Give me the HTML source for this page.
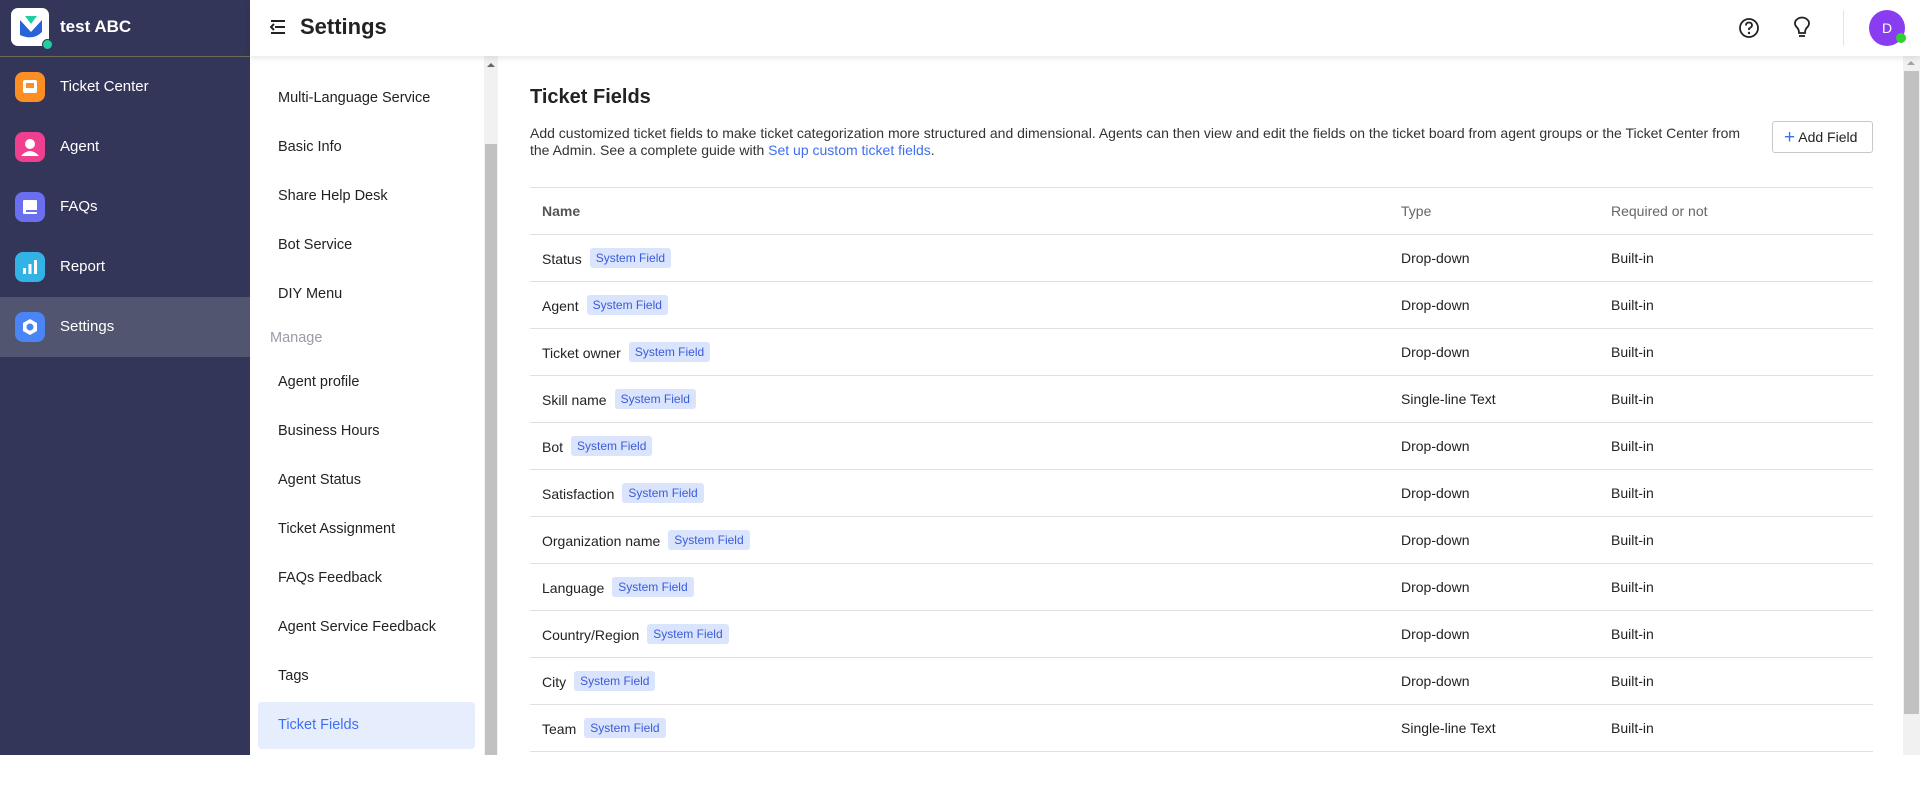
<!DOCTYPE html>
<html><head><meta charset="utf-8"><style>
*{box-sizing:border-box;margin:0;padding:0}
body{width:1920px;height:755px;overflow:hidden;font-family:"Liberation Sans",Arial,sans-serif;background:#fff;position:relative;color:#222}
.side{position:absolute;left:0;top:0;width:250px;height:755px;background:#343659}
.logo{position:absolute;left:11px;top:8px;width:38px;height:38px;background:#fff;border-radius:7px}
.logo .dot{position:absolute;right:-4px;bottom:-4px;width:11px;height:11px;border-radius:50%;background:#1ecfa0;border:1px solid #343659}
.brand{position:absolute;left:60px;top:17px;color:#fff;font-weight:bold;font-size:17px}
.sdiv{position:absolute;left:0;top:56px;width:250px;height:1px;background:#6b6a55}
.nav{position:absolute;left:0;width:250px;height:60px;color:#fff;font-size:15px}
.nav.act{background:#515570}
.nav .ic{position:absolute;left:15px;top:15px;width:30px;height:30px;border-radius:8px}
.nav span{position:absolute;left:60px;top:21px}
.hdr{position:absolute;left:250px;top:0;width:1670px;height:56px;background:#fff;box-shadow:0 2px 6px rgba(0,0,0,.1);z-index:2}
.hdr h1{position:absolute;left:50px;top:14px;font-size:22px;font-weight:bold;color:#222}
.menu{position:absolute;left:250px;top:56px;width:234px;height:699px;background:#fff}
.mi{position:absolute;left:28px;font-size:14.5px;color:#222}
.msb{position:absolute;left:484px;top:56px;width:14px;height:699px;background:#f1f1f1}
.main{position:absolute;left:498px;top:56px;width:1405px;height:699px;background:#fff}
.rsb{position:absolute;left:1903px;top:56px;width:17px;height:699px;background:#f1f1f1}
.row{position:absolute;left:530px;width:1343px;height:47px;border-top:1px solid #e0e0e0;font-size:14px}
.row .n{position:absolute;left:12px;top:15px}
.row .t{position:absolute;left:871px;top:15px}
.row .r{position:absolute;left:1081px;top:15px}
.tag{display:inline-block;background:#dbe4fd;color:#3a5bd9;font-size:12px;padding:3px 6px;border-radius:3px;margin-left:8px;position:relative;top:-2px}
</style></head><body>
<div class="side">
 <div class="logo"><svg width="38" height="38" viewBox="0 0 38 38"><path d="M9 12 L20 24 L31 12 L31 24 Q22 33 9 27Z" fill="#2a63d8"/><path d="M14 8 L26 8 L20 16Z" fill="#1ecfa0"/></svg><div class="dot"></div></div>
 <div class="brand">test ABC</div>
 <div class="sdiv"></div>
 <div class="nav" style="top:57px"><div class="ic" style="background:#fb8f24"><svg width="30" height="30"><rect x="8" y="8" width="14" height="13" rx="2" fill="#fff"/><rect x="11" y="11" width="8" height="5" fill="#fb8f24"/></svg></div><span>Ticket Center</span></div>
 <div class="nav" style="top:117px"><div class="ic" style="background:#ef3f8f"><svg width="30" height="30"><circle cx="15" cy="12" r="5" fill="#fff"/><path d="M6 24 Q15 14 24 24Z" fill="#fff"/></svg></div><span>Agent</span></div>
 <div class="nav" style="top:177px"><div class="ic" style="background:#6a6ff0"><svg width="30" height="30"><rect x="8" y="8" width="14" height="14" rx="1" fill="#fff"/><rect x="11" y="18" width="11" height="2" fill="#6a6ff0"/></svg></div><span>FAQs</span></div>
 <div class="nav" style="top:237px"><div class="ic" style="background:#33b2e6"><svg width="30" height="30"><rect x="8" y="16" width="3" height="6" fill="#fff"/><rect x="13.5" y="12" width="3" height="10" fill="#fff"/><rect x="19" y="8" width="3" height="14" fill="#fff"/></svg></div><span>Report</span></div>
 <div class="nav act" style="top:297px"><div class="ic" style="background:#4b84f5"><svg width="30" height="30"><polygon points="15,7 22,11 22,19 15,23 8,19 8,11" fill="#fff"/><circle cx="15" cy="15" r="3.5" fill="#4b84f5"/></svg></div><span>Settings</span></div>
</div>
<div class="hdr">
 <svg style="position:absolute;left:20px;top:20px" width="16" height="14"><path d="M1 1H15M5 7H15M1 13H15M4 4L1 7L4 10" stroke="#222" stroke-width="2" fill="none"/></svg>
 <h1>Settings</h1>
 <svg style="position:absolute;left:1488px;top:17px" width="22" height="22"><circle cx="11" cy="11" r="9" stroke="#222" stroke-width="1.8" fill="none"/><path d="M8 8.5Q8 5.5 11 5.5Q14 5.5 14 8.5Q14 10 11 11.5V13" stroke="#222" stroke-width="1.8" fill="none"/><circle cx="11" cy="16" r="1.2" fill="#222"/></svg>
 <svg style="position:absolute;left:1542px;top:16px" width="20" height="24"><path d="M7 17Q7 13 4.5 11Q2 8 3.5 5Q6 1.5 10 1.5Q14 1.5 16.5 5Q18 8 15.5 11Q13 13 13 17Z" stroke="#222" stroke-width="1.8" fill="none"/><path d="M7 20H13" stroke="#222" stroke-width="1.8"/></svg>
 <div style="position:absolute;left:1593px;top:10px;width:1px;height:36px;background:#e3e3e3"></div>
 <div style="position:absolute;left:1619px;top:10px;width:36px;height:36px;border-radius:50%;background:#8a3cf0;color:#fff;font-size:14px;text-align:center;line-height:36px">D</div>
 <div style="position:absolute;left:1646px;top:33px;width:10px;height:10px;border-radius:50%;background:#2fd02f"></div>
</div>
<div class="menu">
 <div class="mi" style="top:34px">Multi-Language Service</div>
 <div class="mi" style="top:83px">Basic Info</div>
 <div class="mi" style="top:132px">Share Help Desk</div>
 <div class="mi" style="top:181px">Bot Service</div>
 <div class="mi" style="top:230px">DIY Menu</div>
 <div class="mi" style="top:274px;left:20px;color:#9a9ca6">Manage</div>
 <div class="mi" style="top:318px">Agent profile</div>
 <div class="mi" style="top:367px">Business Hours</div>
 <div class="mi" style="top:416px">Agent Status</div>
 <div class="mi" style="top:465px">Ticket Assignment</div>
 <div class="mi" style="top:514px">FAQs Feedback</div>
 <div class="mi" style="top:563px">Agent Service Feedback</div>
 <div class="mi" style="top:612px">Tags</div>
 <div style="position:absolute;left:8px;top:646px;width:217px;height:47px;background:#e6edfd;border-radius:4px"></div>
 <div class="mi" style="top:661px;color:#3f6ff0">Ticket Fields</div>
</div>
<div class="msb"><div style="position:absolute;left:3px;top:7px;border:4px solid transparent;border-bottom:4px solid #666;border-top:0"></div><div style="position:absolute;left:1px;top:88px;width:12px;height:611px;background:#c1c1c1"></div></div>
<div class="main"></div>
<div class="rsb"><div style="position:absolute;left:4px;top:5px;border:4px solid transparent;border-bottom:4px solid #a3a3a3;border-top:0"></div><div style="position:absolute;left:1px;top:15px;width:15px;height:643px;background:#c1c1c1"></div></div>
<div style="position:absolute;left:530px;top:86px;font-size:20px;font-weight:bold;color:#222">Ticket Fields</div>
<div style="position:absolute;left:530px;top:125px;width:1220px;font-size:14px;line-height:17px;color:#333">Add customized ticket fields to make ticket categorization more structured and dimensional. Agents can then view and edit the fields on the ticket board from agent groups or the Ticket Center from the Admin. See a complete guide with <span style="color:#3f6ff0">Set up custom ticket fields</span>.</div>
<div style="position:absolute;left:1772px;top:121px;width:101px;height:32px;border:1px solid #c8c8c8;border-radius:3px;font-size:14px;line-height:30px;color:#222;padding-left:11px"><span style="color:#3f6ff0;font-size:19px;position:relative;top:1px">+</span> Add Field</div>
<div class="row" style="top:187px;color:#666"><div class="n" style="font-weight:bold;color:#555">Name</div><div class="t">Type</div><div class="r">Required or not</div></div>
<div class="row" style="top:234px"><div class="n">Status<span class="tag">System Field</span></div><div class="t">Drop-down</div><div class="r">Built-in</div></div>
<div class="row" style="top:281px"><div class="n">Agent<span class="tag">System Field</span></div><div class="t">Drop-down</div><div class="r">Built-in</div></div>
<div class="row" style="top:328px"><div class="n">Ticket owner<span class="tag">System Field</span></div><div class="t">Drop-down</div><div class="r">Built-in</div></div>
<div class="row" style="top:375px"><div class="n">Skill name<span class="tag">System Field</span></div><div class="t">Single-line Text</div><div class="r">Built-in</div></div>
<div class="row" style="top:422px"><div class="n">Bot<span class="tag">System Field</span></div><div class="t">Drop-down</div><div class="r">Built-in</div></div>
<div class="row" style="top:469px"><div class="n">Satisfaction<span class="tag">System Field</span></div><div class="t">Drop-down</div><div class="r">Built-in</div></div>
<div class="row" style="top:516px"><div class="n">Organization name<span class="tag">System Field</span></div><div class="t">Drop-down</div><div class="r">Built-in</div></div>
<div class="row" style="top:563px"><div class="n">Language<span class="tag">System Field</span></div><div class="t">Drop-down</div><div class="r">Built-in</div></div>
<div class="row" style="top:610px"><div class="n">Country/Region<span class="tag">System Field</span></div><div class="t">Drop-down</div><div class="r">Built-in</div></div>
<div class="row" style="top:657px"><div class="n">City<span class="tag">System Field</span></div><div class="t">Drop-down</div><div class="r">Built-in</div></div>
<div class="row" style="top:704px"><div class="n">Team<span class="tag">System Field</span></div><div class="t">Single-line Text</div><div class="r">Built-in</div></div>
<div class="row" style="top:751px"></div>
</body></html>
